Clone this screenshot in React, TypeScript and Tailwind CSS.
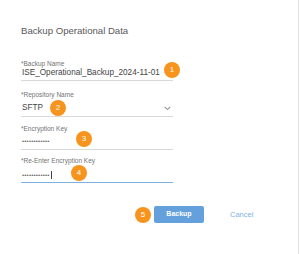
import React from "react";

type Badge = { n: number; x: number; y: number };

// numbered callouts laid over the dialog
const badges: Badge[] = [
  { n: 1, x: 172, y: 70 },
  { n: 2, x: 58, y: 108 },
  { n: 3, x: 84, y: 139 },
  { n: 4, x: 79, y: 173 },
  { n: 5, x: 143, y: 215 },
];

function Callout({ n, x, y }: Badge) {
  return (
    <div
      className="absolute flex h-[16px] w-[16px] items-center justify-center rounded-full bg-[#f7941e] text-[8px] leading-none font-medium text-white"
      style={{ left: x - 8, top: y - 8 }}
    >
      {n}
    </div>
  );
}

function Chevron() {
  return (
    <svg width="7" height="5" viewBox="0 0 7 5" className="mr-[2px]">
      <path d="M0.8 1 L3.5 3.6 L6.2 1" fill="none" stroke="#9a9a9a" strokeWidth="1.1" />
    </svg>
  );
}

export default function App() {
  const dots = "••••••••••••";
  return (
    <div className="relative h-[254px] w-[300px] overflow-hidden bg-white font-['Liberation_Sans',Arial,sans-serif]">
      <div className="absolute top-0 right-[1px] h-full w-[1px] bg-[#e2e2e2]" />
      <div className="pt-[25px] pl-[21px]">
        <h1 className="text-[9.6px] leading-[12px] text-[#58585b]">Backup Operational Data</h1>

        {/* backup name */}
        <div className="mt-[23px] w-[152px]">
          <div className="text-[6.5px] leading-[8px] text-[#737375]">*Backup Name</div>
          <div className="h-[13px] border-b border-[#d8d8d8] pt-[1px] pl-[1px] text-[8.2px] leading-[8px] text-[#444446]">
            ISE_Operational_Backup_2024-11-01
          </div>
        </div>

        {/* repository */}
        <div className="mt-[10px] w-[152px]">
          <div className="text-[6.5px] leading-[8px] text-[#737375]">*Repository Name</div>
          <div className="flex h-[18px] items-start justify-between border-b border-[#d8d8d8] pt-[4px] pl-[1px]">
            <span className="text-[8.2px] leading-[10px] text-[#444446]">SFTP</span>
            <span className="pt-[3px]">
              <Chevron />
            </span>
          </div>
        </div>

        {/* encryption key */}
        <div className="mt-[8px] w-[152px]">
          <div className="text-[6.5px] leading-[8px] text-[#737375]">*Encryption Key</div>
          <div className="h-[17px] border-b border-[#d8d8d8] pt-[3px] pl-[1px] text-[6px] leading-[10px] tracking-[0.2px] text-[#666]">
            {dots}
          </div>
        </div>

        {/* re-enter key */}
        <div className="mt-[7px] w-[152px]">
          <div className="text-[6.5px] leading-[8px] text-[#737375]">*Re-Enter Encryption Key</div>
          <div className="flex h-[18px] items-center border-b border-[#7fb0e3] pt-[2px] pl-[1px]">
            <span className="text-[6px] leading-[10px] tracking-[0.2px] text-[#666]">{dots}</span>
            <span className="ml-[1px] h-[8px] w-[1px] bg-[#444]" />
          </div>
        </div>

        <div className="mt-[23px] flex items-center">
          <button className="ml-[133px] h-[17px] w-[50px] rounded-[2px] bg-[#64a1dc] text-[7px] font-semibold text-white">
            Backup
          </button>
          <span className="ml-[26px] text-[7.5px] text-[#7fb2e6]">Cancel</span>
        </div>
      </div>

      {badges.map((b) => (
        <Callout key={b.n} {...b} />
      ))}
    </div>
  );
}
